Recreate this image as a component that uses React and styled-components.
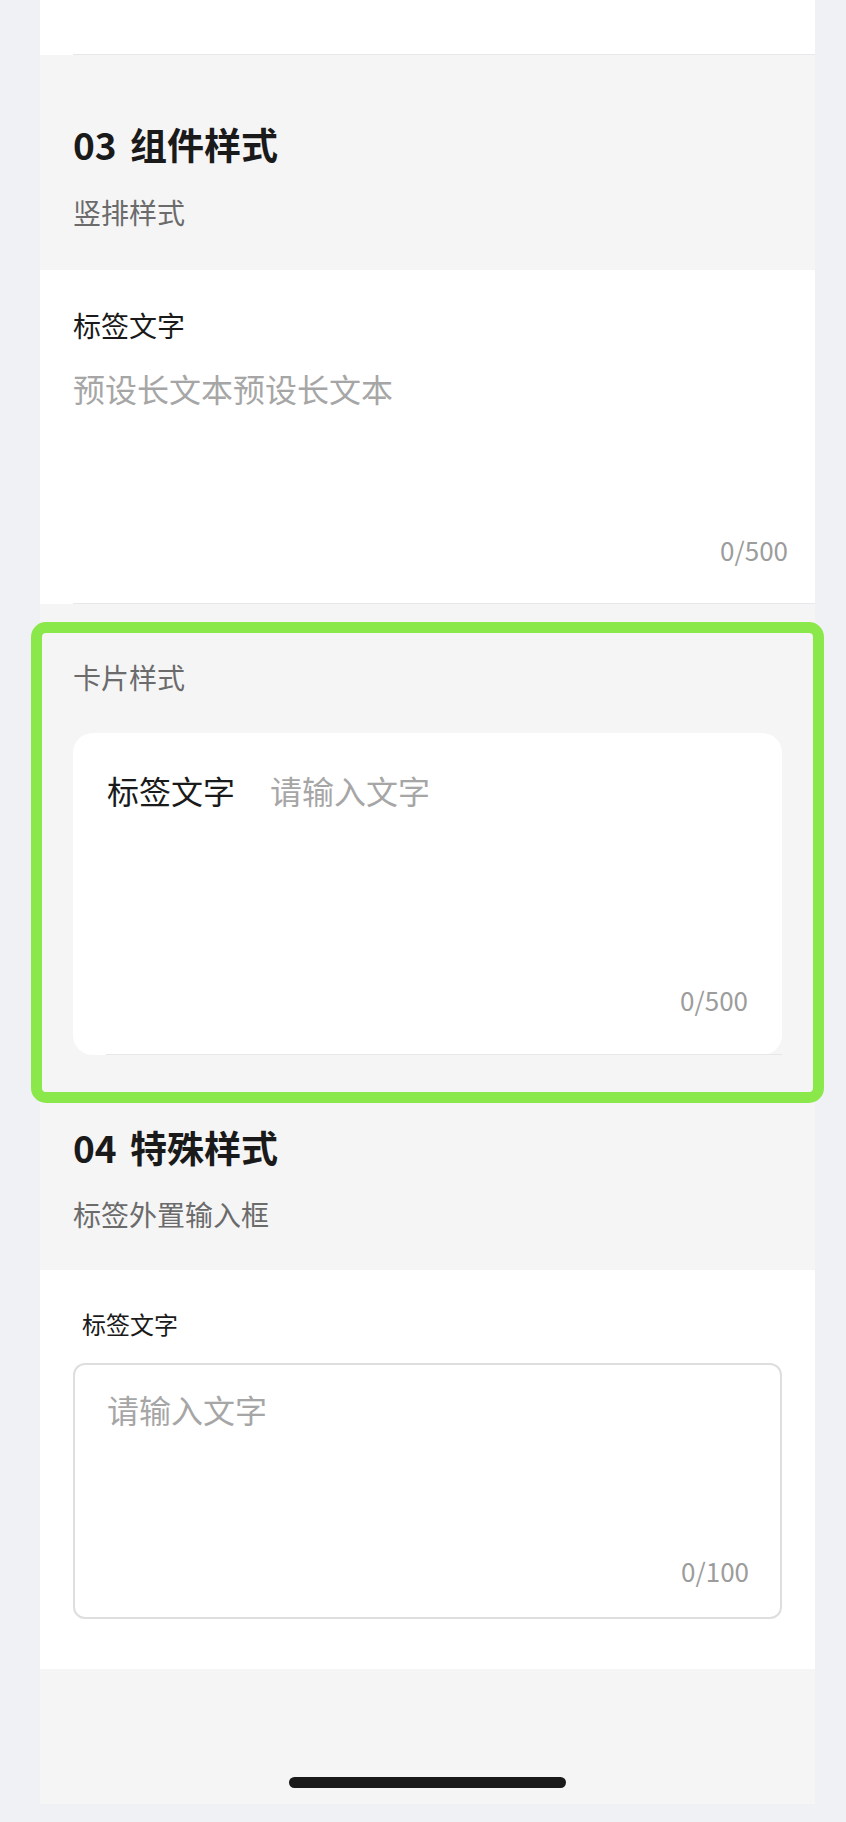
import styled, { createGlobalStyle } from "styled-components";

const GlobalStyle = createGlobalStyle`
  html, body {
    margin: 0;
    padding: 0;
    background: #f0f1f5;
  }
  body {
    font-family: "Noto Sans CJK SC", "Noto Sans", sans-serif;
    -webkit-font-smoothing: antialiased;
  }
  * {
    box-sizing: border-box;
  }
`;

const Column = styled.main`
  width: 775px;
  margin-left: 40px;
  background: #f5f5f6;
  display: flex;
  flex-direction: column;
`;

const TopBlock = styled.div`
  height: 55px;
  background: #fff;
  display: flex;
  flex-direction: column;
  justify-content: flex-end;
`;

const Divider = styled.div`
  height: 1px;
  margin-left: 33px;
  background: #e7e7e9;
`;

const SectionHeader = styled.header`
  padding: ${(p) => p.$top}px 33px ${(p) => p.$bottom}px;
`;

const Heading = styled.h2`
  margin: 0;
  font-size: 37px;
  line-height: 50px;
  font-weight: 700;
  color: #1a1a1a;
  word-spacing: 5px;
`;

const Caption = styled.p`
  margin: ${(p) => p.$margin || "22px 0 0"};
  font-size: 28px;
  line-height: 40px;
  color: #6b6b6b;
`;

const WhiteBlock = styled.section`
  background: #fff;
`;

const FieldBody = styled.div`
  padding: ${(p) => p.$pad};
  display: flex;
  flex-direction: column;
`;

const Label = styled.label`
  font-size: ${(p) => p.$size || 28}px;
  line-height: ${(p) => (p.$size || 28) + 12}px;
  color: #1a1a1a;
  flex: none;
`;

const StackLabel = styled(Label)`
  margin-bottom: 21px;
`;

const Area = styled.textarea`
  display: block;
  width: 100%;
  height: ${(p) => p.$h}px;
  padding: 0;
  margin: 0;
  border: none;
  outline: none;
  resize: none;
  background: transparent;
  font-family: inherit;
  font-size: 32px;
  line-height: 44px;
  color: #1a1a1a;
  overflow: hidden;

  &::placeholder {
    color: #a6a6a6;
  }
`;

const Counter = styled.div`
  text-align: right;
  font-size: 26px;
  line-height: 36px;
  color: #9c9c9c;
`;

const CardSection = styled.section`
  position: relative;
  padding-top: 53px;
`;

const Card = styled.div`
  position: relative;
  margin: 36px 33px 0;
  height: 322px;
  padding: 35px 34px 37px;
  background: #fff;
  border-radius: 20px;
  display: flex;
  flex-direction: column;

  &::after {
    content: "";
    position: absolute;
    left: 33px;
    right: 0;
    bottom: 0;
    height: 1px;
    background: #e7e7e9;
  }
`;

const InlineRow = styled.div`
  display: flex;
  align-items: flex-start;
  gap: 35px;
  flex: 1;
`;

const Highlight = styled.div`
  position: absolute;
  top: 18px;
  left: -9px;
  right: -9px;
  bottom: -48px;
  border: 11px solid #8be84b;
  border-radius: 15px;
  pointer-events: none;
`;

const OuterLabel = styled(Label)`
  padding-left: 9px;
  margin-bottom: 21px;
`;

const Box = styled.div`
  height: 256px;
  padding: 22px 31px 28px 32px;
  border: 2px solid #dedede;
  border-radius: 12px;
  display: flex;
  flex-direction: column;
`;

const Tail = styled.div`
  padding: 108px 0 16px;
  display: flex;
  justify-content: center;
`;

const HomeBar = styled.div`
  width: 277px;
  height: 11px;
  border-radius: 6px;
  background: #1a1a1a;
`;

export default function App() {
  return (
    <>
      <GlobalStyle />
      <Column>
        <TopBlock>
          <Divider />
        </TopBlock>

        <SectionHeader $top={64} $bottom={38}>
          <Heading>03 组件样式</Heading>
          <Caption $margin="23px 0 0">竖排样式</Caption>
        </SectionHeader>

        <WhiteBlock>
          <FieldBody $pad="35px 27px 35px 33px">
            <StackLabel>标签文字</StackLabel>
            <Area $h={166} placeholder="预设长文本预设长文本" />
            <Counter>0/500</Counter>
          </FieldBody>
          <Divider />
        </WhiteBlock>

        <CardSection>
          <Caption $margin="0 33px">卡片样式</Caption>
          <Card>
            <InlineRow>
              <Label $size={32}>标签文字</Label>
              <Area $h={214} placeholder="请输入文字" />
            </InlineRow>
            <Counter>0/500</Counter>
          </Card>
          <Highlight />
        </CardSection>

        <SectionHeader $top={67} $bottom={36}>
          <Heading>04 特殊样式</Heading>
          <Caption>标签外置输入框</Caption>
        </SectionHeader>

        <WhiteBlock>
          <FieldBody $pad="36px 33px 50px">
            <OuterLabel $size={24}>标签文字</OuterLabel>
            <Box>
              <Area $h={166} placeholder="请输入文字" />
              <Counter>0/100</Counter>
            </Box>
          </FieldBody>
        </WhiteBlock>

        <Tail>
          <HomeBar />
        </Tail>
      </Column>
    </>
  );
}
